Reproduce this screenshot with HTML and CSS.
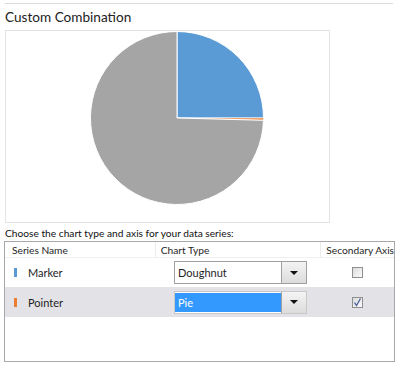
FILE: index.html
```html
<!DOCTYPE html>
<html lang="en">
<head>
    <meta charset="UTF-8">
    <title>Custom Combination</title>
    <link rel="stylesheet" href="styles.css">
</head>
<body>
    <div class="panel">
        <div class="top-rule"></div>
        <h1 class="title">Custom Combination</h1>

        <!-- Chart preview -->
        <div class="preview">
            <svg width="323" height="191" viewBox="0 0 323 191">
                <path d="M171,87 L171,0.5 A86.5,86.5 0 0,1 257.5,87 Z" fill="#5b9bd5" stroke="#fff" stroke-width="1"/>
                <path d="M171,87 L257.5,87 A86.5,86.5 0 0,1 257.45,89.3 Z" fill="#ed7d31" stroke="#fff" stroke-width="0.6"/>
                <path d="M171,87 L257.45,89.3 A86.5,86.5 0 1,1 171,0.5 Z" fill="#a5a5a5" stroke="#fff" stroke-width="1"/>
            </svg>
        </div>

        <p class="hint">Choose the chart type and axis for your data series:</p>

        <!-- Series table -->
        <div class="series">
            <div class="row head">
                <div class="cell name">Series Name</div>
                <div class="cell type">Chart Type</div>
                <div class="cell axis">Secondary Axis</div>
            </div>
            <div class="row">
                <div class="cell name"><span class="swatch blue"></span>Marker</div>
                <div class="cell type">
                    <div class="combo">
                        <span class="combo-text">Doughnut</span>
                        <span class="combo-btn"><span class="arrow"></span></span>
                    </div>
                </div>
                <div class="cell axis"><span class="check"></span></div>
            </div>
            <div class="row selected">
                <div class="cell name"><span class="swatch orange"></span>Pointer</div>
                <div class="cell type">
                    <div class="combo active">
                        <span class="combo-text">Pie</span>
                        <span class="combo-btn"><span class="arrow"></span></span>
                    </div>
                </div>
                <div class="cell axis">
                    <span class="check">
                        <svg width="9" height="9" viewBox="0 0 9 9"><path d="M1.5,4.5 L3.5,7.5 L7.5,0.5" fill="none" stroke="#4c5f9c" stroke-width="1.3"/></svg>
                    </span>
                </div>
            </div>
        </div>
    </div>
</body>
</html>
```

FILE: styles.css
```css
/* Basic styling */
body {
    margin: 0;
    background: #fff;
    font-family: Lato, "Open Sans", sans-serif;
    color: #1e1e1e;
}

.panel {
    width: 400px;
    height: 366px;
    padding: 3px 5px 0 4px;
    box-sizing: border-box;
    display: flex;
    flex-direction: column;
}

.top-rule {
    height: 1px;
    background: #dcdcdc;
    margin: 0 2px 0 1px;
}

.title {
    font-size: 13.6px;
    font-weight: normal;
    margin: 5px 0 0 1px;
    height: 21px;
    line-height: 17px;
    color: #222;
}

/* Chart preview */
.preview {
    width: 323px;
    height: 191px;
    border: 1px solid #e3e3e3;
    margin-left: 1px;
}

.preview svg {
    display: block;
}

.hint {
    font-size: 10.2px;
    margin: 3px 0 0 1px;
    line-height: 15px;
    color: #111;
}

/* Series table */
.series {
    flex: 1;
    margin-bottom: 4px;
    border: 1px solid #a8a8a8;
    background: #fff;
    font-size: 11px;
}

.row {
    display: flex;
    align-items: center;
    height: 29px;
}

.row.head {
    height: 15px;
    font-size: 10.2px;
    border-bottom: 1px solid #f0f0f0;
}

.row.selected {
    height: 30px;
    background: #e2e2e7;
}

.cell {
    display: flex;
    align-items: center;
    box-sizing: border-box;
    white-space: nowrap;
}

.name {
    width: 151px;
    padding-left: 7px;
}

.type {
    width: 167px;
    padding-left: 18px;
}

.axis {
    flex: 1;
    justify-content: center;
}

.head .cell {
    height: 100%;
}

.head .type {
    padding-left: 5px;
    border-left: 1px solid #ececec;
}

.head .axis {
    border-left: 1px solid #ececec;
    justify-content: flex-start;
    padding-left: 5px;
}

.swatch {
    width: 3px;
    height: 9px;
    margin: 0 11px 0 2px;
}

.swatch.blue {
    background: #5b9bd5;
}

.swatch.orange {
    background: #ed7d31;
}

/* Drop down box */
.combo {
    display: flex;
    width: 133px;
    height: 23px;
    box-sizing: border-box;
    border: 1px solid #a0a0a0;
    background: #fff;
}

.combo-text {
    flex: 1;
    padding-left: 3px;
    line-height: 21px;
    font-size: 11px;
}

.combo.active {
    border-color: #c8c8c8;
}

.combo.active .combo-text {
    background: #3399ff;
    color: #fff;
    margin: 1px 0;
    line-height: 19px;
}

.combo-btn {
    width: 24px;
    border-left: 1px solid #a0a0a0;
    background: linear-gradient(#f4f4f4, #dcdcdc);
    display: flex;
    align-items: center;
    justify-content: center;
}

.arrow {
    width: 0;
    height: 0;
    border-left: 4px solid transparent;
    border-right: 4px solid transparent;
    border-top: 4px solid #111;
}

/* Checkbox */
.check {
    width: 11px;
    height: 11px;
    box-sizing: border-box;
    border: 1px solid #8e8f8f;
    background: linear-gradient(135deg, #dcdcdc, #fbfbfb);
    display: flex;
    align-items: center;
    justify-content: center;
    margin-left: -2px;
}
```
